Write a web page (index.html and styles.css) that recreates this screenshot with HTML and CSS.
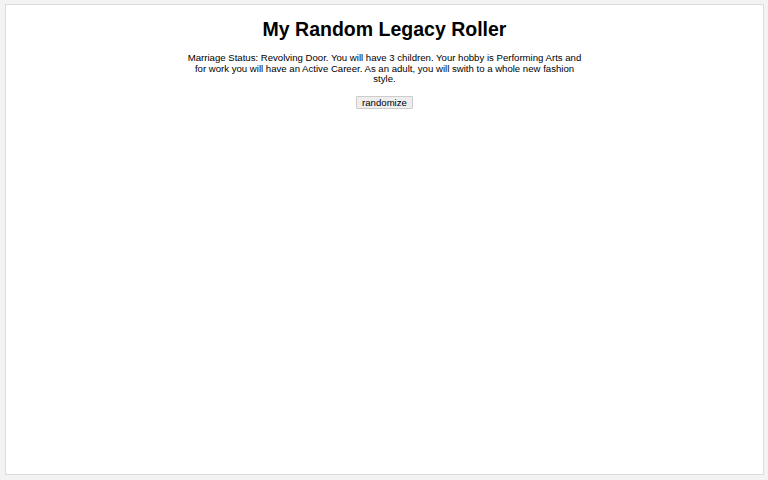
FILE: index.html
```html
<!DOCTYPE html>
<html lang="en">
<head>
<meta charset="UTF-8">
<meta name="viewport" content="width=device-width, initial-scale=1.0">
<title>My Random Legacy Roller</title>
<link rel="stylesheet" href="styles.css">
</head>
<body>
<div class="page">
  <h1 class="title">My Random Legacy Roller</h1>
  <p class="result">Marriage Status: Revolving Door. You will have 3 children. Your hobby is Performing Arts and for work you will have an Active Career. As an adult, you will swith to a whole new fashion style.</p>
  <div class="actions">
    <button type="button" class="roll-button">randomize</button>
  </div>
</div>
</body>
</html>
```

FILE: styles.css
```css
body {
  margin: 0;
  padding: 4px 4px 4px 5px;
  background-color: #f3f3f3;
  font-family: "Liberation Sans", Arial, sans-serif;
  color: #000;
}

.page {
  height: 469px;
  background-color: #fff;
  border: 1px solid #dcdcdc;
  text-align: center;
}

.title {
  margin: 12px 0 0;
  font-size: 19.5px;
  line-height: 24px;
  font-weight: bold;
}

.result {
  width: 400px;
  margin: 12px auto 0;
  font-size: 9.6px;
  line-height: 10.5px;
}

.actions {
  margin-top: 7px;
}

.roll-button {
  font-family: "Liberation Sans", Arial, sans-serif;
  font-size: 9.6px;
  line-height: 11px;
  padding: 0 5px;
  background-color: #eee;
  border: 1px solid #ccc;
  border-radius: 1px;
  color: #000;
}
```
